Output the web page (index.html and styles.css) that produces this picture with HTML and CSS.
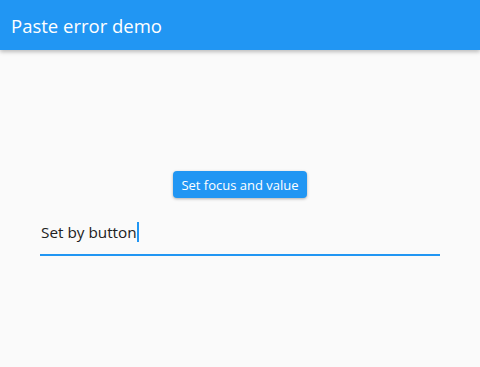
FILE: index.html
```html
<!DOCTYPE html>
<html lang="en">
<head>
  <meta charset="UTF-8">
  <meta name="viewport" content="width=device-width, initial-scale=1.0">
  <title>Paste error demo</title>
  <link rel="stylesheet" href="styles.css">
</head>
<body>

  <header class="app-bar">
    <h1>Paste error demo</h1>
  </header>

  <main class="content">
    <button class="set-button">Set focus and value</button>

    <div class="field">
      <span class="field-text">Set by button</span><span class="caret"></span>
    </div>
  </main>

</body>
</html>
```

FILE: styles.css
```css
body {
  font-family: 'Open Sans', 'Noto Sans', sans-serif;
  background-color: #fafafa;
  margin: 0;
  padding: 0;
  height: 100vh;
  overflow: hidden;
}

.app-bar {
  height: 50px;
  background-color: #2196f3;
  display: flex;
  align-items: center;
  padding: 0 11px;
  box-shadow: 0 2px 4px rgba(0, 0, 0, 0.25);
}

.app-bar h1 {
  margin: 0;
  color: #fff;
  font-size: 18.5px;
  font-weight: normal;
}

.content {
  display: flex;
  flex-direction: column;
  align-items: center;
  padding: 121px 40px 0;
}

.set-button {
  font-family: inherit;
  font-size: 13px;
  color: #fff;
  background-color: #2196f3;
  border: none;
  border-radius: 4px;
  height: 27px;
  padding: 0 8px;
  box-shadow: 0 1px 3px rgba(0, 0, 0, 0.3);
}

.field {
  align-self: stretch;
  margin-top: 16px;
  height: 42px;
  display: flex;
  align-items: center;
  border-bottom: 2px solid #2196f3;
  box-sizing: border-box;
  padding: 0 0 4px 1px;
}

.field-text {
  font-size: 15.3px;
  color: #212121;
}

.caret {
  width: 2px;
  height: 20px;
  background-color: #2196f3;
}
```
